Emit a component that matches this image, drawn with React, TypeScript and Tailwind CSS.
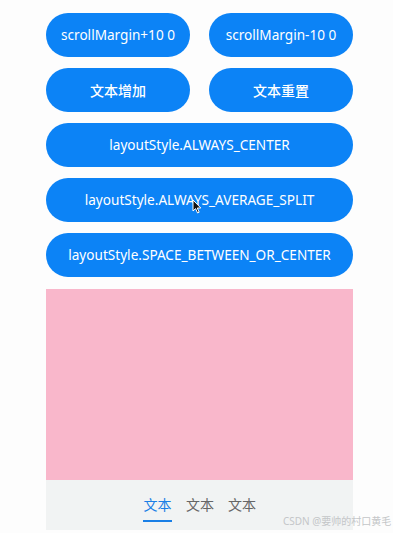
import React from "react";

const btn =
  "h-[44px] rounded-full bg-[#0c83f6] text-white text-[13.6px] flex items-center justify-center";

const App = () => {
  return (
    <div
      className="relative w-[393px] h-[533px] bg-[#fdfdfd] overflow-hidden"
      style={{ fontFamily: '"Noto Sans", "Noto Sans CJK SC", sans-serif' }}
    >
      <div className="pt-[13px] pl-[46px] w-[353px] flex flex-col gap-[11px]">
        <div className="flex justify-between">
          <div className={`${btn} w-[144px]`}>scrollMargin+10 0</div>
          <div className={`${btn} w-[144px]`}>scrollMargin-10 0</div>
        </div>
        <div className="flex justify-between">
          <div className={`${btn} w-[144px] text-[14px] font-medium`}>文本增加</div>
          <div className={`${btn} w-[144px] text-[14px] font-medium`}>文本重置</div>
        </div>
        <div className={btn}>layoutStyle.ALWAYS_CENTER</div>
        <div className={btn}>layoutStyle.ALWAYS_AVERAGE_SPLIT</div>
        <div className={btn}>layoutStyle.SPACE_BETWEEN_OR_CENTER</div>
        <div className="flex flex-col mt-[1px]">
          <div className="h-[191px] bg-[#f9b7cb]" />
          <div className="h-[50px] bg-[#f1f3f3] flex justify-center gap-[14px] pt-[15px] text-[14px]">
            <div className="flex flex-col items-center">
              <span className="text-[#1a7fe6] leading-[20px]">文本</span>
              <div className="mt-[5px] w-[29px] h-[2px] bg-[#1a7fe6]" />
            </div>
            <span className="text-[#666666] leading-[20px]">文本</span>
            <span className="text-[#666666] leading-[20px]">文本</span>
          </div>
        </div>
      </div>

      <span className="absolute left-[283px] top-[514px] text-[10px] text-[#c4c6c8]">
        CSDN @要帅的村口黄毛
      </span>

      <svg
        className="absolute left-[192px] top-[199px]"
        width="10"
        height="15"
        viewBox="0 0 10 15"
      >
        <path
          d="M1 1 L1 12 L3.6 9.6 L5.6 14 L7.2 13.2 L5.3 9 L8.8 9 Z"
          fill="#111"
          stroke="#fff"
          strokeWidth="1"
        />
      </svg>
    </div>
  );
};

export default App;
